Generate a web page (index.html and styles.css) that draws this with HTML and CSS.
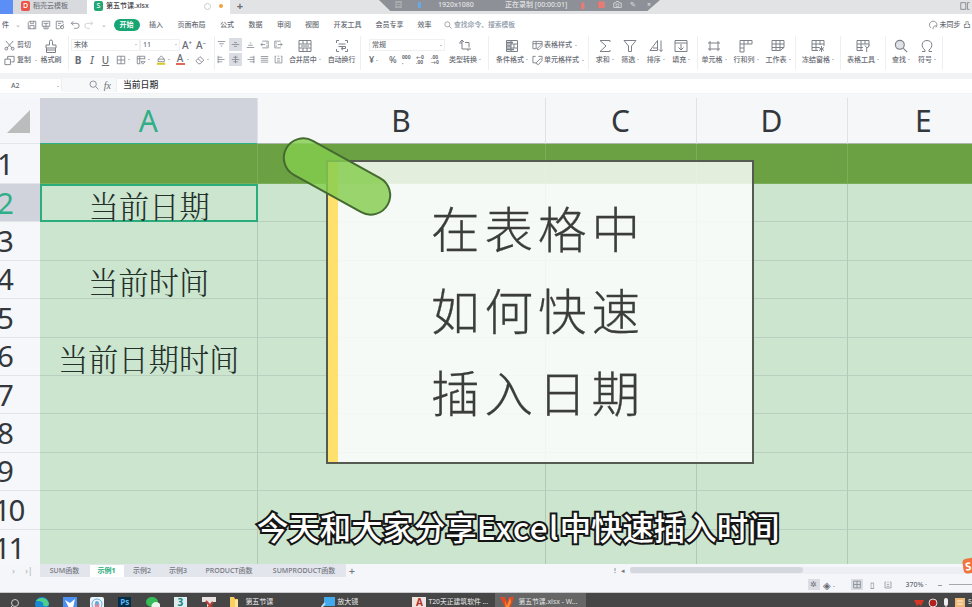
FILE: index.html
```html
<!DOCTYPE html>
<html lang="zh-CN">
<head>
<meta charset="utf-8">
<title>第五节课.xlsx</title>
<link rel="stylesheet" href="styles.css">
</head>
<body>
<svg class="defs" aria-hidden="true">
  <symbol id="save" viewBox="0 0 12 12"><path d="M1.5 3 3 1.5h7.500v9h-9zM3.500 10.500v-4h5v4M4 1.500V4h4V1.500"/></symbol>
  <symbol id="printout" viewBox="0 0 12 12"><path d="M1.500 1.500h9v6h-9zM3 4h6M6 4v6M3.500 7.500v3h5v-3"/></symbol>
  <symbol id="preview" viewBox="0 0 12 12"><path d="M9.500 4V1.500h-8v9h4M3.500 4h4M3.500 6.500h2M6 10l4.500-5"/><circle cx="8.500" cy="8.500" r="2"/></symbol>
  <symbol id="undo" viewBox="0 0 12 12"><path d="M4 1.500 1.500 4 4 6.500M1.500 4H8a3 3 0 0 1 0 6H5"/></symbol>
  <symbol id="search" viewBox="0 0 12 12"><circle cx="5" cy="5" r="3.800"/><path d="m8 8 3.300 3.300"/></symbol>
  <symbol id="cut" viewBox="0 0 12 12"><path d="m2 1 7 8M10 1 3 9"/><circle cx="2.500" cy="9.500" r="1.500"/><circle cx="9.500" cy="9.500" r="1.500"/></symbol>
  <symbol id="copy" viewBox="0 0 12 12"><path d="M4 1.500h7v6H8M1 4.500h6v6H1zM4 1.500v3"/></symbol>
  <symbol id="brush" viewBox="0 0 14 14"><path d="M5.500 6V2.500a1.500 1.500 0 0 1 3 0V6H12v3H2V6zM2.500 9v4.500h9V9M2.500 11h9"/></symbol>
  <symbol id="border" viewBox="0 0 12 12"><path d="M1.500 1.500h9v9h-9zM6 1.500v9M1.500 6h9"/></symbol>
  <symbol id="shape" viewBox="0 0 12 12"><path d="M10.500 5V1.500h-9v9H5M1.500 4.500h9M4.500 1.500v9M6 8h5l-3 3z"/></symbol>
  <symbol id="bucket" viewBox="0 0 12 12"><path d="m2.500 5 4-4 3.500 4v3H2.500zM2.500 5H10"/><path class="yellow" d="M1 10.500h10"/></symbol>
  <symbol id="eraser" viewBox="0 0 12 12"><path d="m1 7 5-5 4.500 4-4 4.500H4zM3.500 4.500l4.500 4"/></symbol>
  <symbol id="top" viewBox="0 0 12 12"><path d="M1 2h10M3 5h6M5 8h2"/></symbol>
  <symbol id="mid" viewBox="0 0 12 12"><path d="M1 6h10M4 3.500h4M4 8.500h4"/></symbol>
  <symbol id="bot" viewBox="0 0 12 12"><path d="M1 10h10M3 7h6M5 4h2"/></symbol>
  <symbol id="left" viewBox="0 0 12 12"><path d="M1.500 1v10M1 3h6M1 6h9M1 9h6"/></symbol>
  <symbol id="center" viewBox="0 0 12 12"><path d="M6 1v10M3 3h6M1 6h10M3 9h6"/></symbol>
  <symbol id="right" viewBox="0 0 12 12"><path d="M10.500 1v10M5 3h6M2 6h9M5 9h6"/></symbol>
  <symbol id="lines" viewBox="0 0 12 12"><path d="M1 2h10M1 4.500h10M1 7h10M1 9.500h10"/></symbol>
  <symbol id="indent" viewBox="0 0 12 12"><path d="M3 1.500h8v9H3M1 6h6M3.500 4 1 6l2.500 2M8 4h2M8 8h2"/></symbol>
  <symbol id="spread" viewBox="0 0 12 12"><path d="M3 1.500H1.500v9h9v-9H9M4 5h4M4 8h4M5 1.500h2"/></symbol>
  <symbol id="merge" viewBox="0 0 14 14"><path d="M1 1.500h12v11H1zM1 5h12M1 9h12M5 1.500V5M9 1.500V5M5 9v3.500M9 9v3.500M3 7h8"/></symbol>
  <symbol id="wrap" viewBox="0 0 14 14"><path d="M4 1.500H1.500V4M10 1.500h2.500V4M1.500 10v2.500H4M12.500 10v2.500H10M3.500 5h7M3.500 7.500h7v2H7M8 8 6 9.500 8 11"/></symbol>
  <symbol id="crop" viewBox="0 0 14 14"><path d="M4 1v9h9M1 4h3M7 3.500h4v5M10 12v-2M4 1 2 3M4 1l2 2"/></symbol>
  <symbol id="cond" viewBox="0 0 14 14"><path d="M1.500 1.500h11v11h-11zM1.500 5h11M1.500 9h11M6 1.500v11M9 5v4"/><path class="thick" d="M2 3.500h6M2 7h4M2 10.500h7"/></symbol>
  <symbol id="style" viewBox="0 0 12 12"><path d="M1 1.500h10v4M1 1.500v8h4M1 4h10M4.500 1.500v8M6 9l4-4 1.500 1.500-4 4H6z"/></symbol>
  <symbol id="cellstyle" viewBox="0 0 12 12"><path d="M4 1.500H1v7h3M7 1.500h4V5M4 9l5-5 2 2-4 4.500z"/></symbol>
  <symbol id="sum" viewBox="0 0 14 14"><path d="M12 3V1.500H2L8 7l-6 5.500h10V11"/></symbol>
  <symbol id="filter" viewBox="0 0 14 14"><path d="M1 1.500h12L8.500 7v5.500h-3V7z"/></symbol>
  <symbol id="sort" viewBox="0 0 14 14"><path d="M1 11.500h7.500v-10zM4 9h4M12 1.500v11M10 10.500l2 2 2-2"/></symbol>
  <symbol id="fill" viewBox="0 0 14 14"><path d="M1 1.500h12v11H1zM1 4h12M7 5v6M4.500 8.500 7 11l2.500-2.500"/></symbol>
  <symbol id="cells" viewBox="0 0 14 14"><path d="M1 4h12M1 10h12M3 2v10M11 2v10"/></symbol>
  <symbol id="rowcol" viewBox="0 0 14 14"><path d="M1 1.500h12V5H5v8H1zM5 1.500V5H1M9 1.500V5M1 9h4"/></symbol>
  <symbol id="sheet" viewBox="0 0 14 14"><path d="M1 1.500h12v7l-4 3H1zM1 5h12M1 8.500h12M5 1.500v10M9 1.500v10"/></symbol>
  <symbol id="freeze" viewBox="0 0 14 14"><path d="M1 1.500h12V7M1 1.500v10h6M1 5h12M1 8.500h7M5 1.500v10M9 1.500V6M10.500 7v6M8 8.500l5 3M13 8.500l-5 3"/></symbol>
  <symbol id="tools" viewBox="0 0 14 14"><path d="M1 1.500h12v6M1 1.500v10h6M1 5h12M1 8.500h6M5 1.500v10M9 1.500V5M9 6.500l1.500 2h1.500l1-2M10.700 8.500v4.500"/></symbol>
  <symbol id="omega" viewBox="0 0 14 14"><path d="M2 12.500h3V11C.5 8 1.500 1.500 7 1.500S13.500 8 9 11v1.500h3"/></symbol>
  <symbol id="cloud" viewBox="0 0 12 12"><path d="M3.500 9.500A4.500 4.500 0 1 1 9.500 9M6 11c0-3 1-4 4-4"/></symbol>
</svg>

<div class="screen">
  <header class="titlebar">
    <div class="home"></div>
    <div class="tab"><i class="logo red">D</i><span>稻壳云模板</span></div>
    <div class="tab current"><i class="logo green">S</i><span>第五节课.xlsx</span><i class="ring"></i><i class="dot"></i></div>
    <div class="newtab">+</div>
    <div class="winbtn"><svg viewBox="0 0 12 12"><path d="M1.500 2h6v8h-6zM9.500 2H12M9.500 2v8H12"/></svg></div>
    <div class="recorder">
      <span class="lock">▤</span><i class="bluebar"></i><span class="res">1920x1080</span>
      <span class="rectime">正在录制 [00:00:01]</span>
      <b>▮</b><b>■</b><svg viewBox="0 0 12 12"><path d="M1 4h2.500L4.500 2h3l1 2H11v6H1z"/><circle cx="6" cy="7" r="2"/></svg><span>✎</span><span>×</span>
    </div>
  </header>

  <nav class="menu">
    <span>件</span><span class="faint">⌄</span>
    <svg><use href="#save"/></svg><svg><use href="#printout"/></svg><svg><use href="#preview"/></svg><svg><use href="#undo"/></svg><svg class="flip"><use href="#undo"/></svg><span class="faint">⌄</span>
    <span class="start">开始</span><span>插入</span><span>页面布局</span><span>公式</span><span>数据</span><span>审阅</span><span>视图</span><span>开发工具</span><span>会员专享</span><span>效率</span>
    <span class="find"><svg><use href="#search"/></svg>查找命令、搜索模板</span>
    <span class="sync"><svg><use href="#cloud"/></svg>未同步</span><span>凸</span>
  </nav>

  <section class="ribbon">
    <div class="group clip">
      <div class="stack"><span><svg><use href="#cut"/></svg>剪切</span><span><svg><use href="#copy"/></svg>复制<i></i></span></div>
      <div class="tool"><svg><use href="#brush"/></svg><span>格式刷</span></div>
    </div>
    <div class="group font">
      <div class="line boxes"><span class="box">宋体<i></i></span><span class="box">11<i></i></span><em>A⁺</em><em>A⁻</em></div>
      <div class="line marks"><b>B</b><em class="ital">I</em><em class="under">U</em><span><svg><use href="#border"/></svg><i></i></span><span><svg><use href="#shape"/></svg><i></i></span><span><svg><use href="#bucket"/></svg><i></i></span><span><em class="inkred">A</em><i></i></span><span><svg><use href="#eraser"/></svg><i></i></span></div>
    </div>
    <div class="group align">
      <div class="alignicons">
        <svg><use href="#top"/></svg><svg class="on"><use href="#mid"/></svg><svg><use href="#bot"/></svg><svg><use href="#indent"/></svg><svg class="flip"><use href="#indent"/></svg>
        <svg><use href="#left"/></svg><svg class="on"><use href="#center"/></svg><svg><use href="#right"/></svg><svg><use href="#lines"/></svg><svg><use href="#spread"/></svg>
      </div>
      <div class="tool"><svg><use href="#merge"/></svg><span>合并居中<i></i></span></div>
      <div class="tool"><svg><use href="#wrap"/></svg><span>自动换行</span></div>
    </div>
    <div class="group number">
      <div class="stack"><span class="box">常规<i></i></span><span class="numfmt"><b>¥<i></i></b><b>%</b><b class="tiny">000<br>,</b><b class="tiny">←0<br>.00</b><b class="tiny">.00<br>→0</b></span></div>
      <div class="tool"><svg><use href="#crop"/></svg><span>类型转换<i></i></span></div>
    </div>
    <div class="group styles">
      <div class="tool"><svg><use href="#cond"/></svg><span>条件格式<i></i></span></div>
      <div class="stack"><span><svg><use href="#style"/></svg>表格样式<i></i></span><span><svg><use href="#cellstyle"/></svg>单元格样式<i></i></span></div>
    </div>
    <div class="group four">
      <div class="tool"><svg><use href="#sum"/></svg><span>求和<i></i></span></div>
      <div class="tool"><svg><use href="#filter"/></svg><span>筛选<i></i></span></div>
      <div class="tool"><svg><use href="#sort"/></svg><span>排序<i></i></span></div>
      <div class="tool"><svg><use href="#fill"/></svg><span>填充<i></i></span></div>
    </div>
    <div class="group three">
      <div class="tool"><svg><use href="#cells"/></svg><span>单元格<i></i></span></div>
      <div class="tool"><svg><use href="#rowcol"/></svg><span>行和列<i></i></span></div>
      <div class="tool"><svg><use href="#sheet"/></svg><span>工作表<i></i></span></div>
    </div>
    <div class="group one"><div class="tool"><svg><use href="#freeze"/></svg><span>冻结窗格<i></i></span></div></div>
    <div class="group one"><div class="tool"><svg><use href="#tools"/></svg><span>表格工具<i></i></span></div></div>
    <div class="group two">
      <div class="tool"><svg class="lens"><use href="#search"/></svg><span>查找<i></i></span></div>
      <div class="tool"><svg><use href="#omega"/></svg><span>符号<i></i></span></div>
    </div>
  </section>

  <section class="formula">
    <div class="namebox"><span>A2</span><i></i></div>
    <div class="fx"><svg><use href="#search"/></svg><em>fx</em></div>
    <div class="value">当前日期</div>
  </section>

  <main class="grid">
    <div class="corner"></div><div class="col sel">A</div><div class="col">B</div><div class="col">C</div><div class="col">D</div><div class="col last">E</div>
    <div class="row"><span>1</span></div><div class="c g"></div><div class="c g"></div><div class="c g"></div><div class="c g"></div><div class="c g"></div>
    <div class="row sel"><span>2</span></div><div class="c active">当前日期</div><div class="c"></div><div class="c"></div><div class="c"></div><div class="c"></div>
    <div class="row"><span>3</span></div><div class="c"></div><div class="c"></div><div class="c"></div><div class="c"></div><div class="c"></div>
    <div class="row"><span>4</span></div><div class="c">当前时间</div><div class="c"></div><div class="c"></div><div class="c"></div><div class="c"></div>
    <div class="row"><span>5</span></div><div class="c"></div><div class="c"></div><div class="c"></div><div class="c"></div><div class="c"></div>
    <div class="row"><span>6</span></div><div class="c">当前日期时间</div><div class="c"></div><div class="c"></div><div class="c"></div><div class="c"></div>
    <div class="row"><span>7</span></div><div class="c"></div><div class="c"></div><div class="c"></div><div class="c"></div><div class="c"></div>
    <div class="row"><span>8</span></div><div class="c"></div><div class="c"></div><div class="c"></div><div class="c"></div><div class="c"></div>
    <div class="row"><span>9</span></div><div class="c"></div><div class="c"></div><div class="c"></div><div class="c"></div><div class="c"></div>
    <div class="row wide"><span>10</span></div><div class="c"></div><div class="c"></div><div class="c"></div><div class="c"></div><div class="c"></div>
    <div class="row wide"><span>11</span></div><div class="c"></div><div class="c"></div><div class="c"></div><div class="c"></div><div class="c"></div>
  </main>

  <section class="sheets">
    <div class="arrows"><span>›</span><span>›|</span></div>
    <div class="names"><span>SUM函数</span><span class="current">示例1</span><span>示例2</span><span>示例3</span><span>PRODUCT函数</span><span>SUMPRODUCT函数</span></div>
    <div class="add">+</div>
    <div class="scroll"><span>⁞</span><span>◂</span><div class="track"><div class="thumb"></div></div></div>
  </section>

  <section class="status">
    <span class="on">✲</span><span class="eye">◈<i></i></span>
    <svg class="on"><use href="#border"/></svg><span>▯</span><svg><use href="#spread"/></svg>
    <span class="zoomval">370%<i></i></span><span>−</span><div class="slider"></div>
  </section>

  <footer class="taskbar">
    <svg viewBox="0 0 14 14"><circle cx="8" cy="6" r="3.500" fill="none" stroke="#ccc"/><path d="m2 12 3.500-3.500" stroke="#ccc"/></svg>
    <svg viewBox="0 0 14 14"><circle cx="7" cy="7" r="7" fill="#1688d4"/><path d="M1 4c3-5 12-4 13 3-1 3-5 3-6 1 1-3-2-4-7-4" fill="#4fcf8b"/></svg>
    <svg viewBox="0 0 14 14"><path fill="#4b8ff0" d="M0 0h14v14H0z"/><path d="m2 3 5 3 5-4-2 9H6z" fill="#fff"/></svg>
    <svg viewBox="0 0 14 14"><rect width="14" height="14" rx="2" fill="#eef5fa"/><circle cx="7" cy="7" r="5" fill="none" stroke="#65a9d8"/><circle cx="7" cy="8" r="2.500" fill="#e1899a"/><circle cx="7" cy="6" r="2" fill="#65a9d8"/></svg>
    <div class="ps">Ps</div>
    <svg viewBox="0 0 14 14"><ellipse cx="6" cy="5" rx="6" ry="5" fill="#35bb57"/><ellipse cx="10" cy="9" rx="4.500" ry="4" fill="#e8f5ea"/></svg>
    <div class="max">3</div>
    <svg viewBox="0 0 14 14"><path fill="#e7e2df" d="M0 0h14v5H9v9H5V5H0z"/><path d="m4 4 7 8M11 5l-7 8" stroke="#bc4038" stroke-width="2"/></svg>
    <div class="task folder"><svg viewBox="0 0 10 14"><path fill="#f8cf60" d="M1 1h4l1 2h3v11H1z"/><path fill="#ffe59a" d="M6 4h3v10H6z"/></svg>第五节课</div>
    <div class="task screenlens"><svg viewBox="0 0 14 14"><path fill="#43a9ed" d="M3 1h11v9H3z"/><path d="m0 12 4-5" stroke="#b9dff7" stroke-width="2"/></svg>放大镜</div>
    <div class="task cad"><b>A</b>T20天正建筑软件 ...</div>
    <div class="task wps"><svg viewBox="0 0 14 14"><path fill="#e24b27" d="M0 1h5l2 6 2-6h5l-4 12H6z"/><path fill="#f59432" d="m5 4 2 6 3-8 1 4-3 7H6z"/></svg>第五节课.xlsx - W...</div>
    <div class="tray"><svg viewBox="0 0 10 12"><path fill="#d63825" d="M0 3h10L7 9 5 7 3 9z"/></svg><svg viewBox="0 0 10 12"><circle cx="5" cy="6" r="4" fill="#b4201c" stroke="#ddd"/></svg><svg viewBox="0 0 10 12"><rect x="3" y="1" width="4" height="8" rx="2" fill="#eee"/><path d="M5 9v3" stroke="#eee"/></svg><svg viewBox="0 0 10 12"><path fill="#eeb777" d="M0 1h10v11H0z"/><path d="M2 4h6M2 7h6" stroke="#fff1dc"/></svg><span>5</span></div>
  </footer>

  <aside class="card">
    <p>在表格中</p><p>如何快速</p><p>插入日期</p>
  </aside>
  <div class="tape"></div>
  <div class="caption">今天和大家分享<span>Excel</span>中快速插入时间</div>
  <div class="ime">S</div>
</div>
</body>
</html>
```
FILE: styles.css
```css
* { box-sizing: border-box; }
body { margin: 0; background: #f5f6f9; font: 500 7px/10px "Noto Sans", "Noto Sans CJK SC", sans-serif; color: #686c74; }
i, em { font-style: normal; }
svg { fill: none; stroke: #7c8088; stroke-width: 1; flex: none; }
.defs { position: absolute; width: 0; height: 0; }
.screen { position: relative; width: 972px; height: 607px; overflow: hidden; display: flex; flex-direction: column; white-space: nowrap; }
.yellow { stroke: #d8c72c; stroke-width: 2.5; }
.thick { stroke-width: 1.5; }

.titlebar { height: 14px; flex: none; display: flex; align-items: center; background: #e2e3e5; }
.home { width: 13px; height: 14px; background: #5c8ff5; }
.tab { width: 74px; height: 14px; padding: 0 0 2px 8px; display: flex; align-items: center; gap: 3px; background: #d8dade; color: #777a82; }
.tab.current { width: 143px; padding-left: 7px; background: #fff; color: #3e4146; }
.logo { width: 9px; height: 10px; border-radius: 2px; color: #fff; font-size: 7px; text-align: center; }
.red { background: #e95349; }
.green { background: #23a775; }
.ring { width: 7px; height: 7px; margin-left: auto; border: 1px solid #c9ccd1; border-radius: 50%; }
.dot { width: 4px; height: 4px; margin: 0 7px 0 5px; border-radius: 50%; background: #f0a23b; }
.newtab { width: 20px; text-align: center; font-size: 11px; font-weight: bold; line-height: 12px; padding-bottom: 2px; }
.winbtn { margin-left: auto; width: 14px; height: 12px; }
.winbtn svg { width: 13px; height: 10px; }
.recorder { position: absolute; left: 379px; top: 0; width: 281px; height: 11px; display: grid; grid-template-columns: 23px 20px 67px 75px 17px 16px 17px 17px 12px; padding: 0 0 2px 16px; align-items: center; background: #8d9096; color: #e2e3e5; clip-path: polygon(0 0, 100% 0, 95.5% 100%, 4% 100%); line-height: 8px; }
.recorder b { color: #e57b74; font-size: 8px; }
.recorder svg { width: 9px; height: 9px; stroke: #e2e3e5; }
.bluebar { width: 3px; height: 6px; background: #67a9e6; }
.rectime { font-size: 7px; }

.menu { height: 22px; flex: none; display: grid; grid-template-columns: 11px 13px 15px 14px 14px 15px 14px 15px 31px 28px 43px 28px 29px 28px 28px 43px 41px 29px 487px 36px 10px; justify-items: center; align-items: center; background: #fff; }
.menu svg { width: 10px; height: 10px; }
.menu .faint { color: #a4a7ac; }
.flip { transform: scaleX(-1); }
.menu svg.flip { opacity: .4; }
.start { width: 26px; height: 12px; border-radius: 6px; background: #17a673; color: #fff; font-weight: bold; line-height: 11px; text-align: center; }
.find { justify-self: start; display: flex; align-items: center; gap: 2px; padding-left: 5px; color: #8b96a5; font-size: 6.8px; }
.find svg { width: 8px; height: 8px; }
.sync { display: flex; align-items: center; gap: 2px; }

.ribbon { height: 37px; flex: none; display: flex; background: #fff; }
.group { height: 34px; display: flex; border-right: 1px solid #eeeff1; }
.ribbon i, .status i, .namebox i { display: inline-block; border: 1.5px solid transparent; border-top-color: #8b8e94; border-bottom: 0; margin-left: 2px; vertical-align: 2px; }
.tool { display: flex; flex-direction: column; align-items: center; gap: 3px; padding-top: 3px; }
.tool svg { width: 14px; height: 14px; }
.tool span { line-height: 8px; }
.tool .lens { fill: #dfe3e8; }
.stack { display: flex; flex-direction: column; gap: 3px; padding-top: 3px; }
.stack > span { height: 12px; display: flex; align-items: center; gap: 2px; }
.stack svg { width: 11px; height: 11px; }
.clip { width: 69px; padding-left: 4px; }
.clip .stack { width: 32px; }
.clip .tool { width: 30px; }
.font { width: 146px; flex-direction: column; padding: 2px 0 0 2px; gap: 2px; }
.line { height: 13px; display: grid; align-items: center; }
.boxes { grid-template-columns: 69px 40px 14px 14px; font-size: 7px; }
.box { display: flex; justify-content: space-between; align-items: center; border: 1px solid #eff0f2; padding: 0 2px; height: 12px; }
.boxes em { font-size: 10px; padding-left: 2px; }
.marks { grid-template-columns: 14px 14px 13px 20px 20px 19px 20px 20px; justify-items: center; }
.marks svg { width: 10px; height: 10px; }
.marks span { display: flex; align-items: center; padding-left: 2px; }
.marks b, .marks em { font-size: 10px; }
.ital { font-style: italic; }
.under { text-decoration: underline; }
.inkred { border-bottom: 2px solid #df6858; line-height: 9px; width: 9px; text-align: center; }
.align { width: 146px; }
.alignicons { width: 72px; display: grid; grid-template-columns: repeat(5, 14.3px); grid-template-rows: 14px 14px; padding-top: 2px; gap: 1px 0; }
.alignicons svg { width: 13px; height: 13px; padding: 2px; }
.alignicons .on, .status .on { background: #dadde3; }
.align .tool { width: 37px; }
.number { width: 128px; padding-left: 8px; }
.number .stack { width: 78px; }
.number .box { width: 76px; }
.numfmt { display: grid !important; grid-template-columns: 20px 13px 14px 15px 14px; gap: 0 !important; }
.numfmt b { font-size: 9px; font-weight: 500; }
.numfmt .tiny { font-size: 5px; line-height: 5px; font-weight: bold; }
.number .tool { width: 36px; }
.styles { width: 100px; padding-left: 4px; }
.styles .tool { width: 38px; }
.styles .stack { padding-left: 1px; }
.styles .stack > span { gap: 1px; }
.four { width: 109px; padding-left: 3px; }
.four .tool { width: 25.5px; }
.three { width: 98px; }
.three .tool { width: 32px; }
.one { width: 45px; justify-content: center; }
.two { width: 57px; padding-left: 2px; }
.two .tool { width: 26px; }

.formula { height: 25px; flex: none; display: flex; align-items: center; background: linear-gradient(#f1f2f4 0 6px, #fff 6px 20px, #f1f3f5 20px 21px, #f6f7f9 21px); padding-bottom: 1px; }
.namebox { width: 62px; display: flex; justify-content: space-between; align-items: center; padding: 2px 2px 0 11px; border-right: 1px solid #eceef1; }
.fx { width: 55px; display: flex; justify-content: flex-end; align-items: center; gap: 5px; padding-right: 5px; border-right: 1px solid #eceef1; background: #f7f8fa; height: 14px; }
.fx svg { width: 10px; height: 10px; }
.fx em { font: italic 10px "Liberation Serif", serif; }
.value { padding: 0 0 1px 6px; font-size: 8.8px; color: #34373b; }

.grid { height: 466px; flex: none; overflow: hidden; display: grid; grid-template-columns: 40px 217.5px 288px 151px 151px 124.5px; grid-template-rows: 46px 40px repeat(10, 38.4px); }
.corner { border-bottom: 1px solid #e3e6ea; display: flex; justify-content: flex-end; padding: 12px 10px 0 0; }
.corner::after { content: ""; width: 23px; height: 23px; background: #bbbdbd; clip-path: polygon(100% 0, 100% 100%, 0 100%); }
.col { display: flex; justify-content: center; align-items: center; font-size: 30px; font-weight: 400; line-height: 40px; color: #34373b; border-right: 1px solid #e0e2e8; border-bottom: 1px solid #aeb7ad; background: #f5f7f9; }
.col.sel, .row.sel { background: #d0d3dc; color: #2eaf85; }
.col.sel { border-bottom-color: #2eaf85; }
.col.last { padding-left: 27px; border-right: 0; }
.row { display: flex; overflow: hidden; font-size: 29.5px; font-weight: 400; line-height: 36px; color: #34373b; background: #f5f7fa; border-bottom: 1px solid #e1e4e9; align-items: center; }
.row span { width: 69px; margin-left: -29px; flex: none; text-align: center; }
.row.wide span { margin-left: -26px; letter-spacing: -2px; }
.c { display: flex; align-items: center; justify-content: center; padding: 3px 0 0 1px; border-right: 1px solid #b3c8b8; border-bottom: 1px solid #bacfc0; background: #cbe5cf; font: 400 30.2px/34px "Noto Serif CJK SC", "Noto Sans CJK SC", serif; color: #24302a; font-weight: 300; }
.c:nth-child(6n) { border-right: 0; }
.c.g { background: #6ba142; border-color: #7bae58; }
.c.active { border: 2px solid #2bac7d; }

.sheets { height: 13px; flex: none; display: flex; align-items: center; color: #747781; }
.arrows { width: 40px; display: flex; gap: 10px; padding-left: 12px; color: #b5b8c0; font-size: 9px; }
.names { width: 306px; height: 13px; display: grid; grid-template-columns: 49px 35px 36px 36px 66px 84px; justify-items: center; align-items: center; background: #e3e5ec; }
.names .current { background: #fff; color: #20aa78; font-weight: bold; width: 34px; height: 12px; line-height: 12px; text-align: center; }
.add { width: 12px; text-align: center; font-size: 11px; }
.scroll { margin-left: auto; width: 358px; display: flex; align-items: center; gap: 5px; }
.track { flex: 1; height: 7px; background: #eceef4; }
.thumb { width: 173px; height: 6px; border-radius: 3px; background: #d5d7df; }

.status { height: 16px; flex: none; display: grid; grid-template-columns: 13px 31px 12px 17px 15px 37px 16px 24px; justify-content: end; justify-items: center; align-items: center; border-bottom: 1px solid #c8cacd; font-size: 8px; }
.status > .on { width: 12px; height: 11px; text-align: center; }
.status .eye { justify-self: start; padding-left: 3px; font-size: 10px; }
.status svg { width: 10px; height: 10px; padding: 1px; }
.status .zoomval { padding-left: 6px; font-size: 7px; }
.slider { width: 23px; height: 1px; background: #a5a8ad; }

.taskbar { height: 14px; flex: none; overflow: hidden; display: grid; grid-template-columns: repeat(8, 27.8px) 95px 92px 86px 91px 1fr; padding: 0; background: #464646; color: #d5d5d5; }
.taskbar svg { width: 14px; height: 14px; margin: 4px 0 0 7px; stroke: none; }
.ps { width: 13px; height: 14px; margin: 4px 0 0 7px; background: #062c46; color: #57b7f3; font-size: 8px; font-weight: bold; text-align: center; }
.max { width: 13px; height: 14px; margin: 4px 0 0 7px; background: #dceeed; color: #168186; font-size: 10px; line-height: 10px; font-weight: bold; text-align: center; }
.task { display: flex; align-items: center; padding-top: 3px; height: 15px; gap: 4px; }
.task svg { margin: 2px 0 0; }
.folder { padding-left: 7px; gap: 6px; }
.folder svg { width: 10px; }
.screenlens { padding-left: 4px; gap: 2px; }
.cad { padding-left: 3px; gap: 2px; font-size: 6.8px; }
.cad b { width: 14px; height: 13px; background: #efe4df; color: #b7322b; font-size: 10px; line-height: 10px; text-align: center; margin-top: 2px; }
.wps { background: #666; padding-left: 5px; gap: 4px; font-size: 6.8px; }
.tray { display: flex; justify-content: flex-end; gap: 3.500px; padding-top: 4px; }
.tray svg { width: 10px; height: 12px; margin: 0; }
.tray span { width: 4px; }

.card { position: absolute; left: 326px; top: 160px; width: 428px; height: 304px; border: 2px solid #555b51; background: linear-gradient(90deg, #fde16c 10px, rgba(255, 255, 255, .82) 10px); padding: 24px 0 0 103px; }
.card p { margin: 0; height: 82px; font: 300 48.500px/82px "Noto Sans CJK SC", sans-serif; letter-spacing: 5px; color: #3b3d3b; -webkit-text-stroke: .3px #3b3d3b; }
.tape { position: absolute; left: 278px; top: 156px; width: 118px; height: 41px; border-radius: 21px; border: 2px solid #456a30; background: rgba(132, 205, 77, .82); transform: rotate(29deg); }
.caption { position: absolute; left: 257px; top: 507px; font: 500 31.400px/40px "Noto Sans CJK SC", sans-serif; color: #fff; -webkit-text-stroke: 4px #151515; paint-order: stroke fill; }
.caption span { letter-spacing: 1.4px; }
.ime { position: absolute; left: 963px; top: 558px; width: 16px; height: 15px; border-radius: 4px; background: #ee7440; color: #fff; font-size: 11px; line-height: 15px; font-weight: bold; padding-left: 2px; transform: rotate(-8deg); }
```
